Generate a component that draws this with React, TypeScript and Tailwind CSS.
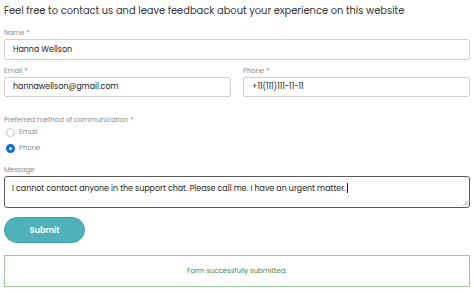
import { FC } from "react";

const Label: FC<{ text: string; className?: string }> = ({ text, className }) => (
  <div className={`text-[6.8px] leading-[10px] text-[#8a8a8a] ${className ?? ""}`}>{text}</div>
);

const Radio: FC<{ label: string; checked?: boolean; className?: string }> = ({
  label,
  checked,
  className,
}) => (
  <div className={`flex h-[12px] items-center gap-[4px] ${className ?? ""}`}>
    <span
      className={
        checked
          ? "ml-[2px] box-border h-[9px] w-[9px] rounded-full border-[3px] border-[#1769d4] bg-white"
          : "ml-[2px] box-border h-[9px] w-[9px] rounded-full border border-[#c4c4c4] bg-white"
      }
    />
    <span className="text-[6.8px] leading-[10px] text-[#8a8a8a]">{label}</span>
  </div>
);

export default function App() {
  return (
    <div
      className="h-[293px] w-[474px] overflow-hidden bg-white px-[4px]"
      style={{ fontFamily: "Poppins, Inter, 'Noto Sans', sans-serif" }}
    >
      <h2 className="h-[22px] whitespace-nowrap text-[9.9px] leading-[22px] text-[#333]">
        Feel free to contact us and leave feedback about your experience on this website
      </h2>

      <Label text="Name *" className="mt-[6px]" />
      <div className="mt-[1px] flex h-[21px] w-[466px] items-center rounded-[2px] border border-[#cfcfcf] px-[8px] text-[7.9px] text-[#222]">
        Hanna Wellson
      </div>

      <div className="mt-[6px] grid w-[466px] grid-cols-2 gap-x-[12px]">
        <div>
          <Label text="Email *" />
          <div className="mt-[1px] flex h-[20px] items-center rounded-[2px] border border-[#cfcfcf] px-[8px] text-[7.9px] text-[#222]">
            hannawellson@gmail.com
          </div>
        </div>
        <div>
          <Label text="Phone *" />
          <div className="mt-[1px] flex h-[20px] items-center rounded-[2px] border border-[#cfcfcf] px-[8px] text-[7.9px] text-[#222]">
            +11(111)111-11-11
          </div>
        </div>
      </div>

      <Label text="Preferred method of communication *" className="mt-[18px]" />
      <Radio label="Email" className="mt-[1px]" />
      <Radio label="Phone" checked className="mt-[4px]" />

      <Label text="Message" className="mt-[11px]" />
      <div className="relative mt-[1px] h-[32px] w-[466px] rounded-[3px] border-[1.5px] border-[#5a5a5a] px-[7px] pt-[4px] text-[7.9px] leading-[14px] text-[#222]">
        I cannot contact anyone in the support chat. Please call me. I have an urgent matter.
        <span className="ml-[1px] inline-block h-[10px] w-px translate-y-[2px] bg-[#222]" />
        <svg className="absolute bottom-[1px] right-[1px]" width="5" height="5" viewBox="0 0 5 5">
          <path d="M5 0 L0 5 M5 2.5 L2.5 5" stroke="#999" strokeWidth="0.8" />
        </svg>
      </div>

      <button className="mt-[9px] flex h-[26px] w-[81px] items-center justify-center rounded-full border border-[#43a0a8] bg-[#4fb1b9] text-[8.2px] font-semibold text-white">
        Submit
      </button>

      <div className="mt-[12px] flex h-[32px] w-[466px] items-center justify-center border border-[#9ccb9c] text-[6.9px] text-[#3f8a3f]">
        Form successfully submitted.
      </div>
    </div>
  );
}
